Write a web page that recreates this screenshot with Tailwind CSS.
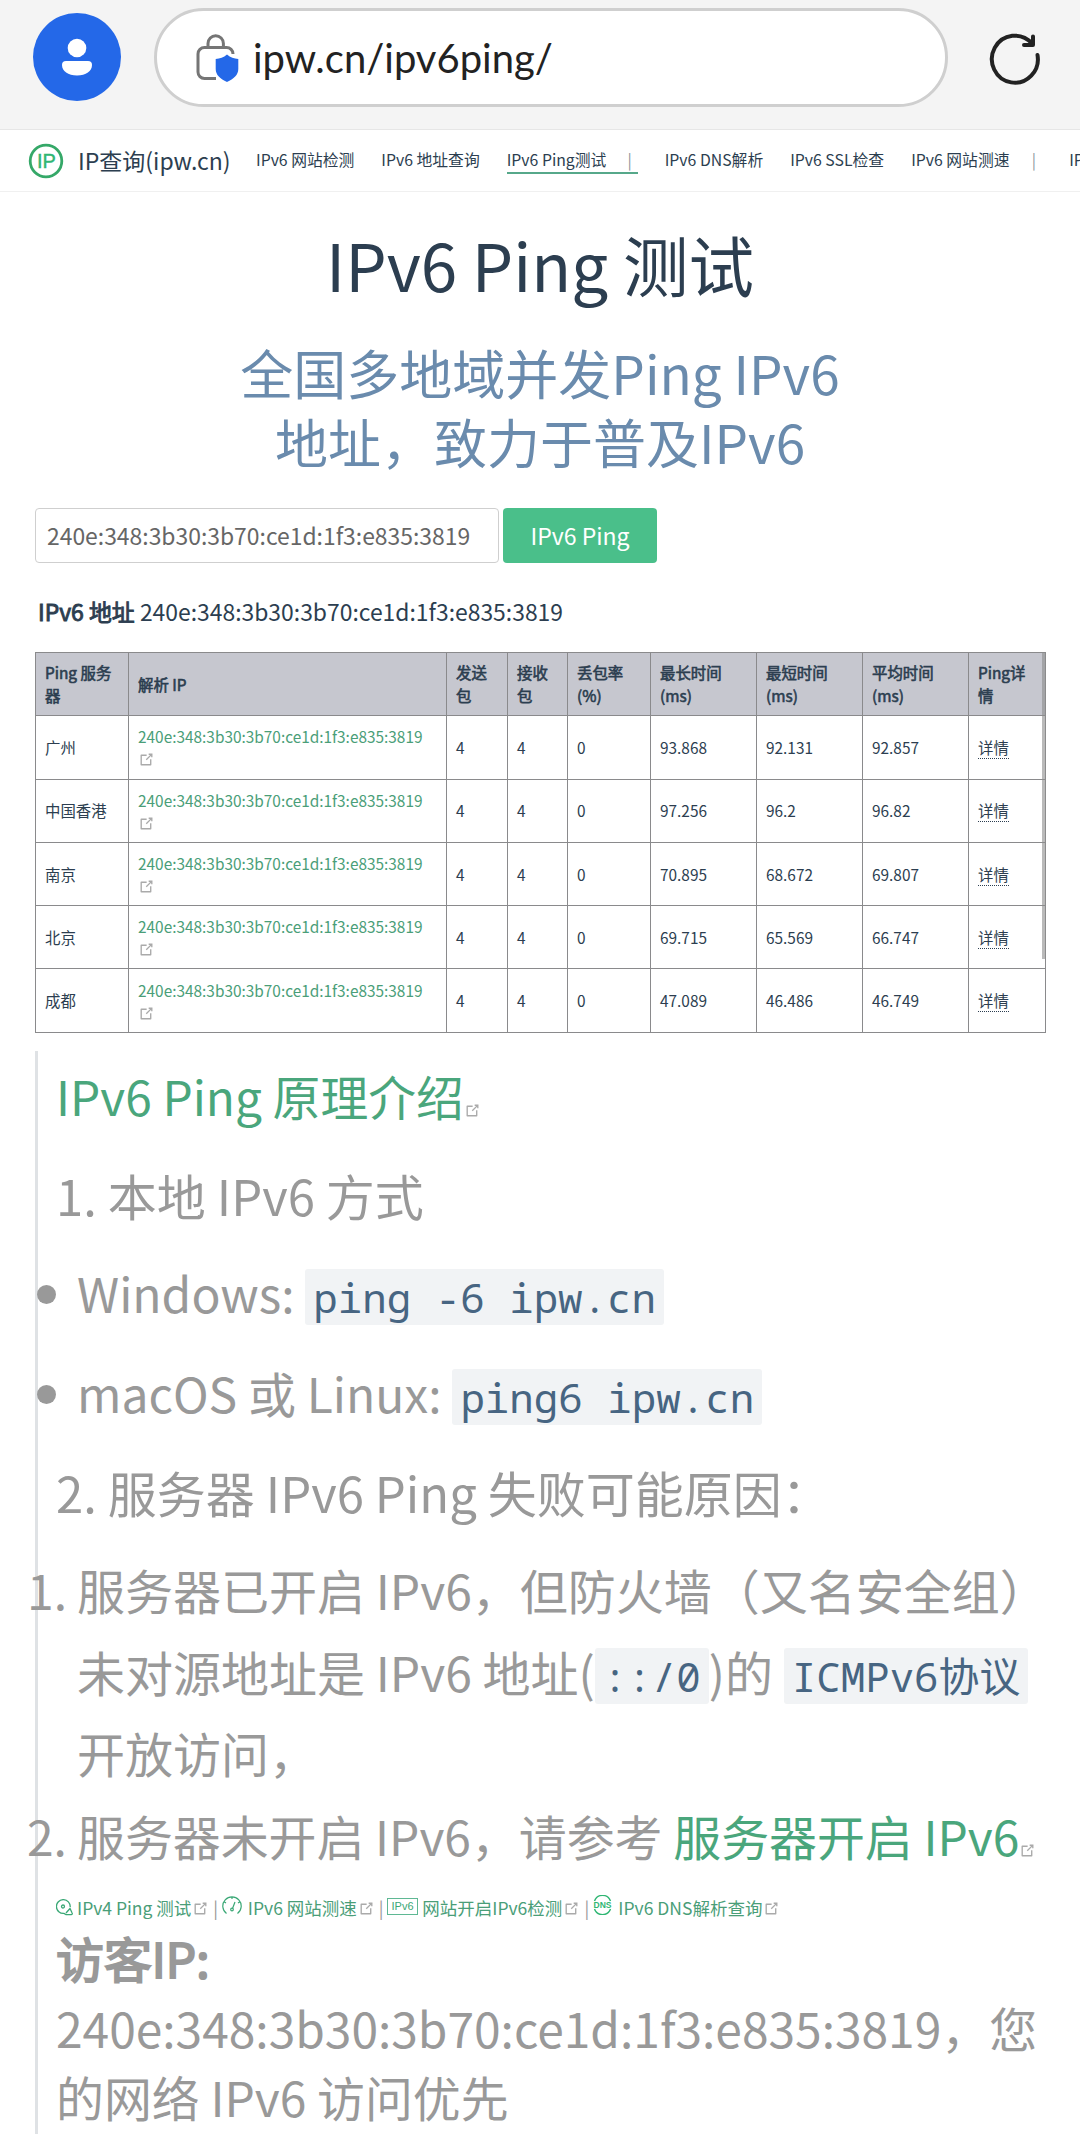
<!DOCTYPE html>
<html lang="zh-CN">
<head>
    <meta charset="UTF-8">
    <meta name="viewport" content="width=device-width, initial-scale=1.0">
    <title>IPv6 Ping 测试</title>
    <script src="https://cdn.jsdelivr.net/npm/@tailwindcss/browser@4"></script>
</head>
<body class="bg-white h-[2135px] overflow-hidden text-[#2c3e50] font-['Noto_Sans_CJK_SC',sans-serif]">

<!-- 外链图标 -->
<svg class="hidden">
    <symbol id="out" viewBox="0 0 100 100">
        <path fill="currentColor" d="M18.8,85.1h56l0,0c2.2,0,4-1.8,4-4v-32h-8v28h-48v-48h28v-8h-32l0,0c-2.2,0-4,1.8-4,4v56C14.8,83.3,16.6,85.1,18.8,85.1z"/>
        <polygon fill="currentColor" points="45.7,48.7 51.3,54.3 77.2,28.5 77.2,37.2 85.2,37.2 85.2,14.9 62.8,14.9 62.8,22.9 71.5,22.9"/>
    </symbol>
</svg>

<!-- 浏览器地址栏 -->
<div class="h-[130px] bg-[#f4f4f4] border-b border-[#e6e6e6] flex items-start pl-[33px]">
    <div class="mt-[13px] w-[88px] h-[88px] rounded-full bg-[#2468e8] shrink-0">
        <svg class="w-[88px] h-[88px]" viewBox="0 0 88 88" fill="#fff">
            <circle cx="44" cy="35" r="9.3"/>
            <path d="M33 48h22q4 0 4 4c0 6-6 10.500-15 10.500S29 58 29 52q0-4 4-4z"/>
        </svg>
    </div>
    <div class="ml-[33px] mt-[8px] w-[794px] h-[99px] rounded-full border-3 border-[#cfcfcf] bg-white flex items-center shrink-0">
        <svg class="ml-[37px] w-[46px] h-[52px] shrink-0" viewBox="0 0 46 52" fill="none">
            <path d="M14 15v-3.500a7.700 7.700 0 0 1 15.400 0V15M22 46.500H10.500a6.500 6.500 0 0 1-6.500-6.500V22a6.500 6.500 0 0 1 6.500-6.500h22a6.500 6.500 0 0 1 6.500 6.500" stroke="#757575" stroke-width="3"/>
            <path d="M33 22.500c3.500 3 7 4.200 11.300 4.500v10c0 6-4.500 9.800-11.300 13-6.800-3.200-11.300-7-11.300-13V27c4.300-.3 7.800-1.500 11.300-4.500z" fill="#2468e8"/>
        </svg>
        <span class="ml-[13px] text-[40px] leading-none text-[#222] font-[Lato,sans-serif]">ipw.cn/ipv6ping/</span>
    </div>
    <svg class="ml-[40px] mt-[30px] w-[56px] h-[56px] shrink-0" viewBox="0 0 56 56" fill="none" stroke="#222" stroke-width="4" stroke-linecap="round" stroke-linejoin="round">
        <path d="M49.500 25A23 23.500 0 1 1 44 13.500M45 6.500v8.500H36"/>
    </svg>
</div>

<!-- 导航 -->
<nav class="h-[62px] border-b border-[#f0f0f0] flex items-center pl-[28px] whitespace-nowrap overflow-hidden">
    <svg class="w-[36px] h-[36px] shrink-0" viewBox="0 0 36 36">
        <circle cx="18" cy="18" r="15.800" fill="none" stroke="#35a868" stroke-width="2.800"/>
        <text x="18.500" y="25" text-anchor="middle" font-family="Liberation Sans" font-size="20" fill="#2fb673" stroke="#2fb673" stroke-width=".4">IP</text>
    </svg>
    <span class="ml-[14px] w-[178px] shrink-0 text-[23px] leading-[36px] -mt-[2px]">IP查询(ipw.cn)</span>
    <div class="flex gap-[27px] text-[15.8px] leading-[24px] -mt-px">
        <a>IPv6 网站检测</a>
        <a>IPv6 地址查询</a>
        <a class="flex w-[131px] justify-between pr-[6px] border-b-2 border-[#56a88a] -mb-[2px]">IPv6 Ping测试<span class="text-[#8b939b]">|</span></a>
        <a>IPv6 DNS解析</a>
        <a>IPv6 SSL检查</a>
        <a class="flex w-[131px] justify-between pr-[6px]">IPv6 网站测速<span class="text-[#8b939b]">|</span></a>
        <a>IPv6 工具</a>
    </div>
</nav>

<header class="text-center">
    <h1 class="mt-[24px] text-[65.5px] leading-[96px]">IPv6 Ping 测试</h1>
    <p class="mt-[26px] text-[53px] leading-[69px] text-[#6a8bad]">全国多地域并发Ping IPv6<br>地址，致力于普及IPv6</p>
</header>

<main class="pl-[35px]">
    <form class="mt-[32px] flex gap-[4px]">
        <input type="text" value="240e:348:3b30:3b70:ce1d:1f3:e835:3819"
               class="w-[464px] h-[55px] rounded-[4px] border border-[#cfcfcf] px-[11px] pb-[2px] text-[22.9px] text-[#666]">
        <button type="button" class="w-[154px] h-[55px] rounded-[4px] bg-[#4abf8a] text-white text-[23px]">IPv6 Ping</button>
    </form>

    <p class="mt-[31px] ml-[3px] h-[58px] text-[22.9px] leading-[34px]"><strong class="font-normal [-webkit-text-stroke:0.9px]">IPv6 地址</strong> 240e:348:3b30:3b70:ce1d:1f3:e835:3819</p>

    <div class="relative w-[1011px]">
        <table class="w-[1011px] table-fixed border-collapse text-[15.4px] leading-[23px] text-left [&_td]:border [&_td]:border-[#8a8a8c] [&_td]:px-[9px] [&_td]:py-0 [&_th]:border [&_th]:border-[#8a8a8c] [&_th]:px-[9px] [&_th]:py-0 [&_th]:font-normal [&_th]:[-webkit-text-stroke:0.6px] [&_tr]:h-[63.3px]">
            <colgroup>
                <col class="w-[93px]"><col class="w-[318px]"><col class="w-[61px]"><col class="w-[60px]"><col class="w-[83px]"><col class="w-[106px]"><col class="w-[106px]"><col class="w-[106px]"><col class="w-[77px]">
            </colgroup>
            <thead>
            <tr class="bg-[#c6c7cf]">
                <th>Ping 服务器</th>
                <th>解析 IP</th>
                <th>发送<br>包</th>
                <th>接收<br>包</th>
                <th>丢包率<br>(%)</th>
                <th>最长时间<br>(ms)</th>
                <th>最短时间<br>(ms)</th>
                <th>平均时间<br>(ms)</th>
                <th>Ping详<br>情</th>
            </tr>
            </thead>
            <tbody>
            <tr>
                <td>广州</td>
                <td><a class="block pt-[2px] text-[#4a9e78]">240e:348:3b30:3b70:ce1d:1f3:e835:3819</a><svg class="w-[17px] h-[17px] mt-[3px] mb-[3px] text-[#aaa]"><use href="#out"/></svg></td>
                <td>4</td><td>4</td><td>0</td><td>93.868</td><td>92.131</td><td>92.857</td>
                <td><span class="border-b border-dotted border-[#2c3e50]">详情</span></td>
            </tr>
            <tr>
                <td>中国香港</td>
                <td><a class="block pt-[2px] text-[#4a9e78]">240e:348:3b30:3b70:ce1d:1f3:e835:3819</a><svg class="w-[17px] h-[17px] mt-[3px] mb-[3px] text-[#aaa]"><use href="#out"/></svg></td>
                <td>4</td><td>4</td><td>0</td><td>97.256</td><td>96.2</td><td>96.82</td>
                <td><span class="border-b border-dotted border-[#2c3e50]">详情</span></td>
            </tr>
            <tr>
                <td>南京</td>
                <td><a class="block pt-[2px] text-[#4a9e78]">240e:348:3b30:3b70:ce1d:1f3:e835:3819</a><svg class="w-[17px] h-[17px] mt-[3px] mb-[3px] text-[#aaa]"><use href="#out"/></svg></td>
                <td>4</td><td>4</td><td>0</td><td>70.895</td><td>68.672</td><td>69.807</td>
                <td><span class="border-b border-dotted border-[#2c3e50]">详情</span></td>
            </tr>
            <tr>
                <td>北京</td>
                <td><a class="block pt-[2px] text-[#4a9e78]">240e:348:3b30:3b70:ce1d:1f3:e835:3819</a><svg class="w-[17px] h-[17px] mt-[3px] mb-[3px] text-[#aaa]"><use href="#out"/></svg></td>
                <td>4</td><td>4</td><td>0</td><td>69.715</td><td>65.569</td><td>66.747</td>
                <td><span class="border-b border-dotted border-[#2c3e50]">详情</span></td>
            </tr>
            <tr>
                <td>成都</td>
                <td><a class="block pt-[2px] text-[#4a9e78]">240e:348:3b30:3b70:ce1d:1f3:e835:3819</a><svg class="w-[17px] h-[17px] mt-[3px] mb-[3px] text-[#aaa]"><use href="#out"/></svg></td>
                <td>4</td><td>4</td><td>0</td><td>47.089</td><td>46.486</td><td>46.749</td>
                <td><span class="border-b border-dotted border-[#2c3e50]">详情</span></td>
            </tr>
            </tbody>
        </table>
        <!-- 滚动条 -->
        <div class="absolute right-0 top-0 w-[4px] h-[307px] bg-[#8c8c8c]/60"></div>
    </div>

    <blockquote class="mt-[18px] h-[1083px] w-[1045px] border-l-3 border-[#dfe2e5] pl-[18px] pt-[4px] text-[48px] leading-[81.6px] text-[#999] whitespace-nowrap">
        <p class="flex h-[82px] items-baseline text-[47.8px] text-[#4aa67c]">IPv6 Ping 原理介绍<svg class="relative top-[3px] w-[17px] h-[17px] text-[#aaa]"><use href="#out"/></svg></p>
        <p class="mt-[17px] text-[49px]">1. 本地 IPv6 方式</p>
        <ul class="mt-[17px] pl-[21px] space-y-[18px]">
            <li class="relative h-[81.6px]"><i class="absolute -left-[40px] top-[33px] w-[19px] h-[19px] rounded-full bg-[#999]"></i>Windows: <code class="inline-block h-[56px] leading-[57px] px-[8px] rounded-[3px] bg-[#f1f3f5] text-[#476582] text-[40.8px] font-['Noto_Sans_Mono','DejaVu_Sans_Mono','Noto_Sans_CJK_SC',monospace]">ping -6 ipw.cn</code></li>
            <li class="relative h-[81.6px]"><i class="absolute -left-[40px] top-[33px] w-[19px] h-[19px] rounded-full bg-[#999]"></i>macOS 或 Linux: <code class="inline-block h-[56px] leading-[57px] px-[8px] rounded-[3px] bg-[#f1f3f5] text-[#476582] text-[40.8px] font-['Noto_Sans_Mono','DejaVu_Sans_Mono','Noto_Sans_CJK_SC',monospace]">ping6 ipw.cn</code></li>
        </ul>
        <p class="mt-[17px] text-[49px]">2. 服务器 IPv6 Ping 失败可能原因：</p>
        <ol class="mt-[17px] pl-[21px]">
            <li class="relative h-[245.5px]"><span class="absolute -left-[50px]">1.</span>服务器已开启 IPv6，但防火墙（又名安全组）<br>未对源地址是 IPv6 地址(<code class="inline-block h-[56px] leading-[57px] px-[8px] rounded-[3px] bg-[#f1f3f5] text-[#476582] text-[40.8px] font-['Noto_Sans_Mono','DejaVu_Sans_Mono','Noto_Sans_CJK_SC',monospace]">::/0</code>)的 <code class="inline-block h-[56px] leading-[57px] px-[8px] rounded-[3px] bg-[#f1f3f5] text-[#476582] text-[40.8px] font-['Noto_Sans_Mono','DejaVu_Sans_Mono','Noto_Sans_CJK_SC',monospace]">ICMPv6协议</code><br>开放访问，</li>
            <li class="relative h-[81.6px] flex items-baseline text-[47.9px]"><span class="absolute -left-[50px]">2.</span>服务器未开启 IPv6，请参考&nbsp;<a class="text-[#4aa67c]">服务器开启 IPv6</a><svg class="relative top-[3px] w-[17px] h-[17px] text-[#aaa]"><use href="#out"/></svg></li>
        </ol>

        <div class="mt-[17px] h-[30px] flex items-center text-[17.5px] leading-[30px] text-[#4a9e78]">
            <svg class="w-[17px] h-[17px] -mt-[2px]" viewBox="0 0 17 17" fill="none" stroke="#3aa876" stroke-width="1.300">
                <path d="M14.200 8A6.900 6.900 0 1 0 8 14.400l2 1.200h5.500c1 0 1-1 .5-1.800L14 9.500l-4 4.500"/>
                <circle cx="7" cy="7.500" r="1.500"/>
            </svg>
            <a class="ml-[4px]">IPv4 Ping 测试</a>
            <svg class="ml-px w-[17px] h-[17px] text-[#aaa]"><use href="#out"/></svg>
            <span class="w-[12.5px] text-center text-[#999]">|</span>
            <svg class="w-[20px] h-[19px] -mt-[6px]" viewBox="0 0 20 19" fill="none" stroke="#3aa876" stroke-width="1.200">
                <path d="M4.500 17.500A9.200 9.200 0 1 1 15.500 17.500M13 6l-2.500 6.500M10 1v2M2.500 6l1.500 1M17.500 6l-1.500 1"/>
                <circle cx="10" cy="13.500" r="1.300"/>
            </svg>
            <a class="ml-[6px]">IPv6 网站测速</a>
            <svg class="ml-px w-[17px] h-[17px] text-[#aaa]"><use href="#out"/></svg>
            <span class="w-[12.5px] text-center text-[#999]">|</span>
            <svg class="w-[31px] h-[17px] -mt-[3px]" viewBox="0 0 31 17">
                <rect x=".5" y=".5" width="30" height="16" fill="none" stroke="#5fb894"/>
                <text x="15.500" y="12" text-anchor="middle" font-family="Liberation Sans" font-size="11" fill="#3aa876">IPv6</text>
            </svg>
            <a class="ml-[4px]">网站开启IPv6检测</a>
            <svg class="ml-px w-[17px] h-[17px] text-[#aaa]"><use href="#out"/></svg>
            <span class="w-[13px] text-center text-[#999]">|</span>
            <svg class="w-[19px] h-[20px] -mt-[6px]" viewBox="0 0 19 20">
                <path d="M1.500 6A8.500 8.500 0 0 1 17.500 6M1.500 14A8.500 8.500 0 0 0 17.500 14" fill="none" stroke="#2fb673" stroke-width="1.400"/>
                <text x="9.500" y="13" text-anchor="middle" font-family="Liberation Sans" font-size="8.500" font-weight="bold" fill="#2fb673">DNS</text>
            </svg>
            <a class="ml-[6px]">IPv6 DNS解析查询</a>
            <svg class="ml-px w-[17px] h-[17px] text-[#aaa]"><use href="#out"/></svg>
        </div>

        <p class="text-[47.9px] leading-[69.3px]"><strong class="font-normal [-webkit-text-stroke:2px]">访客IP:</strong><br>240e:348:3b30:3b70:ce1d:1f3:e835:3819，您<br>的网络 IPv6 访问优先</p>
    </blockquote>
</main>
</body>
</html>
